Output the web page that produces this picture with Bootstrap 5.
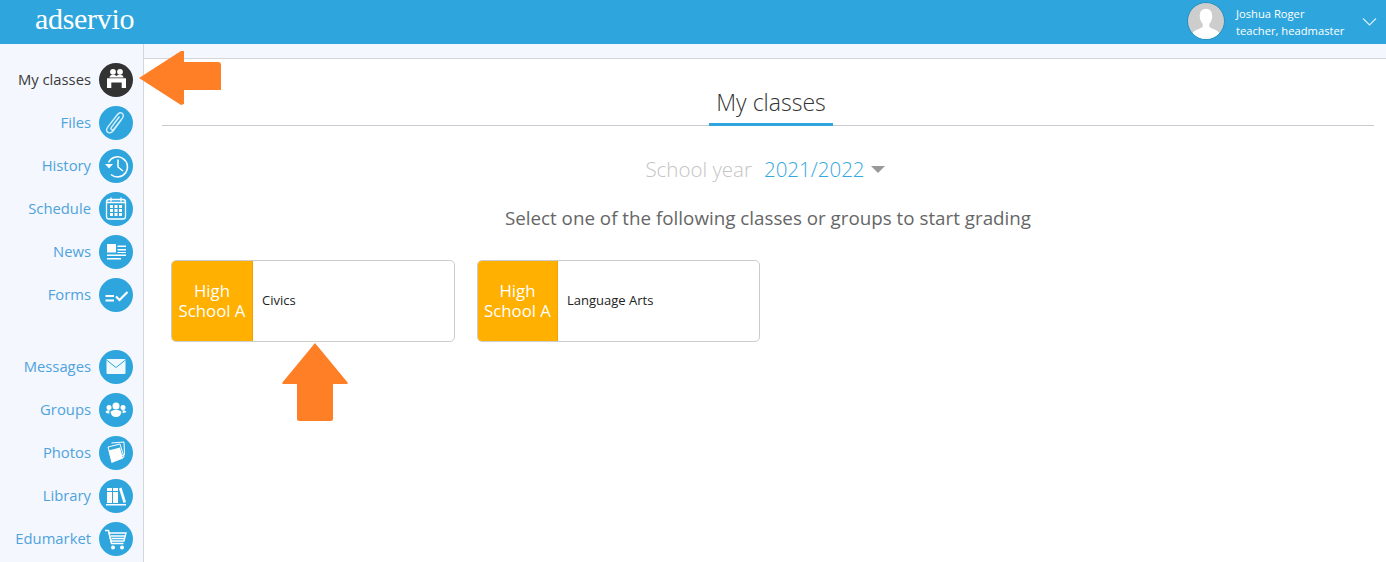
<!DOCTYPE html>
<html lang="en">
<head>
  <meta charset="UTF-8">
  <title>My classes</title>
  <meta name="viewport" content="width=device-width, initial-scale=1">
  <link href="https://cdn.jsdelivr.net/npm/bootstrap@5.3.3/dist/css/bootstrap.min.css" rel="stylesheet">
  <style>
    html, body { height: 562px; overflow: hidden; }
    body { background: #f4f7fe; font-family: "Open Sans", sans-serif; position: relative; }
    .top-bar { height: 44px; background: #2ea6dd; color: #fff; }
    .logo-text { font-family: "Liberation Serif", serif; font-size: 30px; letter-spacing: -.3px; margin-left: 35px; line-height: 44px; position: relative; top: -3px; }
    .avatar { width: 38px; height: 38px; border-radius: 50%; background: #cdcdcd; overflow: hidden; border: 1px solid #2590c0; margin-bottom: 2px; }
    .user-info { font-size: 11.2px; line-height: 17px; margin-left: 11px; width: 122px; }
    .side-col { width: 144px; height: 518px; border-right: 1px solid #d3d6da; padding-top: 18px; flex: none; }
    .side-link { height: 34px; margin-bottom: 9px; padding-right: 10px; font-size: 14.8px; color: #4ea3dc; text-decoration: none; }
    .side-link.current { color: #3a3a3a; }
    .side-gap { height: 29px; }
    .side-icon { width: 34px; height: 34px; border-radius: 50%; background: #2ea6dd; margin-left: 8px; margin-top: 2px; flex: none; }
    .current .side-icon { background: #333; }
    .main-panel { margin-top: 14px; background: #fff; border-top: 1px solid #d3d6da; padding: 0 12px 0 18px; }
    .page-title { height: 67px; border-bottom: 1px solid #c8ccd0; }
    .page-title span { display: inline-block; font-size: 23px; font-weight: 300; color: #333; height: 67px; padding: 27px 7px 0; line-height: 32px; border-bottom: 3px solid #2ea6dd; margin-left: 6px; }
    .year-row { margin-top: 26px; padding-right: 6px; font-size: 20.5px; line-height: 34px; font-weight: 300; color: #c4c4c4; }
    .year-val { color: #35a8e0; margin-left: 12px; }
    .caret-down { width: 0; height: 0; border-left: 7px solid transparent; border-right: 7px solid transparent; border-top: 7px solid #999; margin-left: 6px; }
    .select-row { margin-top: 17px; font-size: 18.8px; line-height: 30px; color: #666; }
    .class-list { margin-top: 27px; padding-left: 9px; gap: 22px; }
    .class-card { height: 82px; border: 1px solid #ccc; border-radius: 5px; overflow: hidden; background: #fff; font-size: 13px; color: #222; }
    .class-tag { background: #ffb000; color: #fff; font-size: 16.8px; line-height: 20px; text-align: center; border-right: 1px solid #f5a000; flex: none; }
    .class-name { padding-left: 9px; }
    .over-arrow { position: absolute; }
  </style>
</head>
<body>

  <div class="top-bar d-flex align-items-center">
    <div class="logo-text">adservio</div>
    <div class="ms-auto d-flex align-items-center">
      <div class="avatar">
        <svg viewBox="0 0 38 38" width="36" height="36"><path fill="#fff" d="M19 6c-5 0-7 4-6.500 9 .3 3 1.500 5.500 3 7v3c-2 2-8 3-10 6-1 1.500-1 3-1 7h29c0-4 0-5.500-1-7-2-3-8-4-10-6v-3c1.500-1.500 2.700-4 3-7C25.900 10 24 6 19 6z"/></svg>
      </div>
      <div class="user-info">Joshua Roger<br>teacher, headmaster</div>
      <svg class="me-2 ms-1" width="16" height="10" viewBox="0 0 16 10"><path d="M1 1.500l6.500 6.500L14 1.500" fill="none" stroke="#d5eefa" stroke-width="1.200"/></svg>
    </div>
  </div>

  <div class="d-flex">
    <nav class="side-col">
      <a class="side-link current d-flex align-items-center justify-content-end" href="#">My classes
        <span class="side-icon"><svg viewBox="0 0 34 34" width="34" height="34" fill="#fff"><circle cx="14" cy="8.800" r="2.900"/><circle cx="21" cy="8.800" r="2.900"/><path d="M10.500 14.500c0-1.800 1.500-2.800 3.500-2.800 1.400 0 2.700.5 3.500 1.200.8-.7 2.100-1.200 3.500-1.200 2 0 3.500 1 3.500 2.800z"/><path d="M8 15.300h19V25h-4.300v-5.500H12.300V25H8z"/></svg></span></a>
      <a class="side-link d-flex align-items-center justify-content-end" href="#">Files
        <span class="side-icon"><svg viewBox="0 0 34 34" width="34" height="34" fill="none" stroke="#d9f0fb" stroke-width="1.400"><path d="M22.500 13.500 14 25c-1.500 2-4 2.300-5.300 1.200-1.400-1.100-1.200-3.400.2-5.300L18.500 8.500c1.300-1.700 3.300-2.200 4.700-1.200 1.400 1 1.500 3 .2 4.800L15 23c-.8 1-1.800 1.300-2.500.8-.7-.5-.7-1.600 0-2.600l8-10.700"/></svg></span></a>
      <a class="side-link d-flex align-items-center justify-content-end" href="#">History
        <span class="side-icon"><svg viewBox="0 0 34 34" width="34" height="34" fill="none" stroke="#fff" stroke-width="1.500"><path d="M9.500 13.500A10 10 0 1 1 12 25.500"/><path d="M19 10.500V18l5 4"/><path fill="#fff" stroke="none" d="M6 15h8l-4 4.500z"/></svg></span></a>
      <a class="side-link d-flex align-items-center justify-content-end" href="#">Schedule
        <span class="side-icon"><svg viewBox="0 0 34 34" width="34" height="34"><rect x="7.500" y="7.500" width="19" height="19.500" rx="2.500" fill="none" stroke="#fff" stroke-width="1.300"/><path d="M12 5.500v4M22 5.500v4M7.500 10.500h19" stroke="#fff" stroke-width="1.300"/><path d="M11 13h3v3h-3zM15.500 13h3v3h-3zM20 13h3v3h-3zM11 17h3v3h-3zM15.500 17h3v3h-3zM20 17h3v3h-3zM11 21h3v3h-3zM15.500 21h3v3h-3zM20 21h3v3h-3z" fill="#fff"/></svg></span></a>
      <a class="side-link d-flex align-items-center justify-content-end" href="#">News
        <span class="side-icon"><svg viewBox="0 0 34 34" width="34" height="34" fill="#fff"><rect x="8" y="9" width="9" height="8.500"/><path d="M18.500 10.500H27V12h-8.500zM18.500 14H27v1.500h-8.500zM18.500 17H27v1H18.500zM8 19.500h19V21H8zM8 23h14v1.500H8z"/></svg></span></a>
      <a class="side-link d-flex align-items-center justify-content-end" href="#">Forms
        <span class="side-icon"><svg viewBox="0 0 34 34" width="34" height="34" fill="none" stroke="#fff"><path d="M6.500 18h8.500M6.500 22.500h8.500" stroke-width="1.800"/><path d="M17 18.500l3.500 3.500 8-8" stroke-width="2.200"/></svg></span></a>
      <div class="side-gap"></div>
      <a class="side-link d-flex align-items-center justify-content-end" href="#">Messages
        <span class="side-icon"><svg viewBox="0 0 34 34" width="34" height="34"><rect x="7.500" y="9" width="19" height="15" rx="1" fill="#eef8fd"/><path d="M7.500 10l9.500 7.500L26.500 10" fill="none" stroke="#2ea6dd" stroke-width="1"/></svg></span></a>
      <a class="side-link d-flex align-items-center justify-content-end" href="#">Groups
        <span class="side-icon"><svg viewBox="0 0 34 34" width="34" height="34" fill="#fff"><circle cx="17" cy="13" r="3.500"/><circle cx="10" cy="14.500" r="2.500"/><circle cx="24" cy="14.500" r="2.500"/><path d="M11.500 19c1-1.500 3-2 5.500-2s4.500.5 5.500 2c-.3 3-2.500 5-5.500 5s-5.200-2-5.500-5z"/><path d="M6.500 19c.5-1.200 1.800-1.800 3.500-1.800.3 0 .6 0 .8.100-.5 1-.5 1.700-.4 3C8.500 20.800 7.200 20.200 6.500 19zM27.500 19c-.5-1.200-1.800-1.800-3.500-1.800-.3 0-.6 0-.8.100.5 1 .5 1.700.4 3 2-.500 3.200-.900 3.900-1.300z"/></svg></span></a>
      <a class="side-link d-flex align-items-center justify-content-end" href="#">Photos
        <span class="side-icon"><svg viewBox="0 0 34 34" width="34" height="34"><path d="M12.500 7l12.500-1 .5 13-3 .5" fill="none" stroke="#fff" stroke-width="1"/><path d="M9 11l12-3 4 13-12 4z" fill="none" stroke="#fff" stroke-width="1"/><path d="M9.500 14.500l11.500-3 3 11-11.500 4.500z" fill="#fff"/></svg></span></a>
      <a class="side-link d-flex align-items-center justify-content-end" href="#">Library
        <span class="side-icon"><svg viewBox="0 0 34 34" width="34" height="34" fill="#fff"><path d="M8 9h5v15H8zM14 9h5v15h-5z"/><path d="M20 9.500l2.500-1 4.500 14.500-2.500 1z"/><path d="M7 25h20v1.500H7z"/><path d="M8 12h11v1H8z" fill="#2ea6dd"/></svg></span></a>
      <a class="side-link d-flex align-items-center justify-content-end" href="#">Edumarket
        <span class="side-icon"><svg viewBox="0 0 34 34" width="34" height="34"><path d="M6 8.500h3.500l3 13h12" fill="none" stroke="#fff" stroke-width="1.500"/><path d="M10 11h17l-2 8H12zM12 14h14M12.500 16.500h13" fill="none" stroke="#fff" stroke-width="1.300"/><circle cx="14" cy="25.500" r="2" fill="#fff"/><circle cx="23" cy="25.500" r="2" fill="#fff"/></svg></span></a>
    </nav>

    <main class="main-panel flex-grow-1">
      <div class="page-title text-center"><span>My classes</span></div>
      <div class="year-row d-flex justify-content-center align-items-center">
        School year <span class="year-val">2021/2022</span><span class="caret-down"></span>
      </div>
      <div class="select-row text-center">Select one of the following classes or groups to start grading</div>
      <div class="class-list d-flex">
        <div class="class-card d-flex" style="width: 284px">
          <div class="class-tag d-flex align-items-center justify-content-center" style="width: 81px">High School A</div>
          <div class="class-name d-flex align-items-center">Civics</div>
        </div>
        <div class="class-card d-flex" style="width: 283px">
          <div class="class-tag d-flex align-items-center justify-content-center" style="width: 80px">High School A</div>
          <div class="class-name d-flex align-items-center">Language Arts</div>
        </div>
      </div>
    </main>
  </div>

  <svg class="over-arrow" style="left: 138px; top: 50px" width="84" height="56" viewBox="0 0 84 56"><path fill="#ff7f27" d="M1 28 43 1h3v11h34c2 0 3 1 3 3v25H46v14l-3 1z"/></svg>
  <svg class="over-arrow" style="left: 281px; top: 343px" width="68" height="78" viewBox="0 0 68 78"><path fill="#ff7f27" d="M34 0 67 40l-1 1H52v35c0 1-1 2-2 2H18c-1 0-2-1-2-2V41H2l-1-1z"/></svg>

  <script src="https://cdn.jsdelivr.net/npm/bootstrap@5.3.3/dist/js/bootstrap.bundle.min.js"></script>
</body>
</html>
